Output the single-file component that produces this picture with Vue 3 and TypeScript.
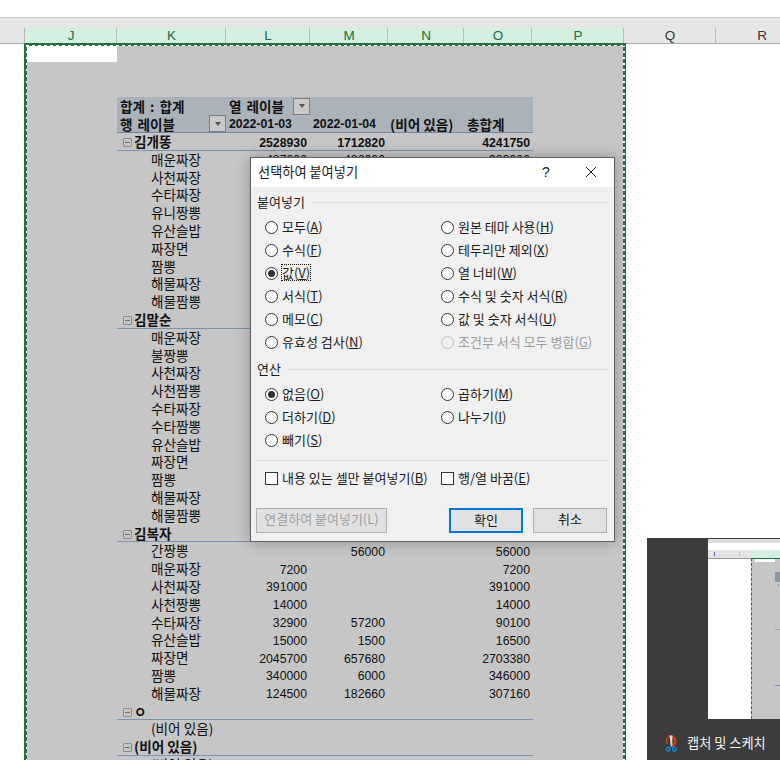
<script setup lang="ts">
interface Row { name: string; bold?: boolean; a?: string; b?: string; c?: string }
interface Opt { t: string; k: string; focus?: boolean; on?: boolean; off?: boolean }

const cols: { n: string; w: number; sel: boolean }[] = [
  { n: 'J', w: 92, sel: true }, { n: 'K', w: 109, sel: true }, { n: 'L', w: 84, sel: true },
  { n: 'M', w: 78, sel: true }, { n: 'N', w: 76, sel: true }, { n: 'O', w: 68, sel: true },
  { n: 'P', w: 92, sel: true }, { n: 'Q', w: 92, sel: false }, { n: 'R', w: 92, sel: false },
]

const sub = (name: string, a = '', b = '', c = ''): Row => ({ name, a, b, c })
const rows: Row[] = [
  { name: '김개똥', bold: true, a: '2528930', b: '1712820', c: '4241750' },
  sub('매운짜장', '487000', '486000', '923000'),
  sub('사천짜장'), sub('수타짜장'), sub('유니짱뽕'), sub('유산슬밥'), sub('짜장면'), sub('짬뽕'), sub('해물짜장'), sub('해물짬뽕'),
  { name: '김말순', bold: true },
  sub('매운짜장'), sub('불짱뽕'), sub('사천짜장'), sub('사천짬뽕'), sub('수타짜장'), sub('수타짬뽕'), sub('유산슬밥'), sub('짜장면'), sub('짬뽕'), sub('해물짜장'), sub('해물짬뽕'),
  { name: '김복자', bold: true },
  sub('간짱뽕', '', '56000', '56000'),
  sub('매운짜장', '7200', '', '7200'),
  sub('사천짜장', '391000', '', '391000'),
  sub('사천짱뽕', '14000', '', '14000'),
  sub('수타짜장', '32900', '57200', '90100'),
  sub('유산슬밥', '15000', '1500', '16500'),
  sub('짜장면', '2045700', '657680', '2703380'),
  sub('짬뽕', '340000', '6000', '346000'),
  sub('해물짜장', '124500', '182660', '307160'),
  { name: 'ㅇ', bold: true },
  sub('(비어 있음)'),
  { name: '(비어 있음)', bold: true },
  sub('(비어 있음)'),
]

const paste: Opt[] = [
  { t: '모두', k: 'A' }, { t: '원본 테마 사용', k: 'H' },
  { t: '수식', k: 'F' }, { t: '테두리만 제외', k: 'X' },
  { t: '값', k: 'V', on: true, focus: true }, { t: '열 너비', k: 'W' },
  { t: '서식', k: 'T' }, { t: '수식 및 숫자 서식', k: 'R' },
  { t: '메모', k: 'C' }, { t: '값 및 숫자 서식', k: 'U' },
  { t: '유효성 검사', k: 'N' }, { t: '조건부 서식 모두 병합', k: 'G', off: true },
]
const ops: Opt[] = [
  { t: '없음', k: 'O', on: true }, { t: '곱하기', k: 'M' },
  { t: '더하기', k: 'D' }, { t: '나누기', k: 'I' },
  { t: '빼기', k: 'S' },
]
</script>

<template>
  <div class="page">
    <div class="top"></div>
    <div class="head">
      <div class="corner"></div>
      <div
        v-for="c in cols"
        :key="c.n"
        class="col"
        :class="{ sel: c.sel }"
        :style="{ width: c.w + 'px' }"
      >{{ c.n }}</div>
    </div>

    <div class="selection">
      <div class="marching"></div>
      <div class="white-cell"></div>
      <div class="pivot">
        <div class="phead">
          <div class="pr">
            <span class="k b">합계 : 합계</span>
            <span class="lab b">열 레이블</span>
            <span class="drop"><i></i></span>
          </div>
          <div class="pr">
            <span class="k b">행 레이블<span class="drop end"><i></i></span></span>
            <span class="d1 b num">2022-01-03</span>
            <span class="d2 b num">2022-01-04</span>
            <span class="d3 b">(비어 있음)</span>
            <span class="d4 b">총합계</span>
          </div>
        </div>
        <div v-for="(r, i) in rows" :key="i" class="row" :class="{ group: r.bold }">
          <span class="k name">
            <span v-if="r.bold" class="exp"></span>{{ r.name }}
          </span>
          <span class="v l num">{{ r.a }}</span>
          <span class="v m num">{{ r.b }}</span>
          <span class="v n"></span>
          <span class="v o num">{{ r.c }}</span>
        </div>
      </div>
    </div>

    <div class="dialog">
      <div class="title">
        <span class="title-text">선택하여 붙여넣기</span>
        <span class="help">?</span>
        <svg class="close" width="12" height="12" viewBox="0 0 12 12">
          <path d="M1 1 L11 11 M11 1 L1 11" stroke="#1a1a1a" stroke-width="1" fill="none" />
        </svg>
      </div>
      <div class="body">
        <div class="legend first"><span>붙여넣기</span><i></i></div>
        <div class="opts six">
          <label v-for="o in paste" :key="o.k" class="opt" :class="{ off: o.off }">
            <span class="radio" :class="{ on: o.on }"></span>
            <span class="txt" :class="{ focus: o.focus }">{{ o.t }}(<u>{{ o.k }}</u>)</span>
          </label>
        </div>
        <div class="legend second"><span>연산</span><i></i></div>
        <div class="opts three">
          <label v-for="o in ops" :key="o.k" class="opt">
            <span class="radio" :class="{ on: o.on }"></span>
            <span class="txt">{{ o.t }}(<u>{{ o.k }}</u>)</span>
          </label>
        </div>
        <div class="rule"></div>
        <div class="opts checks">
          <label class="opt"><span class="check"></span><span class="txt">내용 있는 셀만 붙여넣기(<u>B</u>)</span></label>
          <label class="opt"><span class="check"></span><span class="txt">행/열 바꿈(<u>E</u>)</span></label>
        </div>
        <div class="buttons">
          <button class="btn link" disabled>연결하여 붙여넣기(L)</button>
          <button class="btn ok">확인</button>
          <button class="btn">취소</button>
        </div>
      </div>
    </div>

    <div class="thumb">
      <div class="shot">
        <div class="s-strip"></div>
        <div class="s-head"><b class="t1"></b><b class="t2"></b><span class="s-green"></span></div>
        <div class="s-sheet">
          <span class="s-cell"></span>
          <span class="s-pivot"></span>
          <span class="s-dot"></span>
          <span class="s-tick a"></span>
          <span class="s-tick b2"></span>
        </div>
      </div>
      <div class="caption">
        <svg class="snip" width="14" height="17" viewBox="0 0 14 17">
          <path d="M3.5 1.6 A5 5 0 1 1 7 11" fill="none" stroke="#d5400f" stroke-width="2.6" />
          <path d="M2.6 2.5 A5 5 0 0 0 2.6 8.5" fill="none" stroke="#d5400f" stroke-width="1.4" />
          <path d="M4.6 0.5 L7.4 0.5 L7.4 11.5 L5.8 11.5 Z" fill="#d8d8d8" />
          <circle cx="3" cy="14.2" r="1.8" fill="none" stroke="#1a86d0" stroke-width="1.4" />
          <circle cx="9.4" cy="14.2" r="1.8" fill="none" stroke="#1a86d0" stroke-width="1.4" />
          <path d="M4.4 12.8 L6 11 M8 12.8 L6.6 11" stroke="#1a86d0" stroke-width="1.2" />
        </svg>
        <span class="cap-text">캡처 및 스케치</span>
      </div>
    </div>
  </div>
</template>

<style scoped>
.page {
  position: relative;
  width: 780px;
  height: 760px;
  overflow: hidden;
  background: #fff;
  font-family: "Noto Sans CJK KR", "Liberation Sans", sans-serif;
  color: #1a1a1a;
}
.top { height: 17px; background: #fff; border-bottom: 1px solid #c8c8c8; }
.head {
  display: flex;
  height: 26px;
  padding-top: 10px;
  box-sizing: border-box;
  background: #e6e6e6;
  border-bottom: 1px solid #ababab;
}
.corner { width: 25px; flex: none; border-right: 1px solid #b5b5b5; box-sizing: border-box; }
.col {
  flex: none;
  box-sizing: border-box;
  padding-left: 1px;
  text-align: center;
  font: 13.5px/16px "Liberation Sans", sans-serif;
  color: #333;
  border-right: 1px solid #b9b9b9;
}
.col.sel { background: #d3f0e0; color: #1f6b45; }

.selection {
  position: relative;
  width: 602px;
  height: 718px;
  margin: -1px 0 0 24px;
  background: #c6c6c6;
  overflow: hidden;
}
.marching {
  position: absolute;
  inset: 0;
  box-sizing: border-box;
  border-style: solid;
  border-color: #217346;
  border-width: 2px 1px 0 2px;
  background:
    repeating-linear-gradient(90deg, #fff 0 3px, #217346 3px 6px) 0 0 / 100% 1px no-repeat,
    repeating-linear-gradient(180deg, #fff 0 2px, #217346 2px 6px) 0 0 / 1px 100% no-repeat,
    repeating-linear-gradient(180deg, #fff 0 2px, #217346 2px 6px) 100% 0 / 2px 100% no-repeat;
  pointer-events: none;
}
.white-cell { width: 90px; height: 16px; margin: 3px 0 0 3px; background: #fff; }

.pivot {
  width: 416px;
  margin: 35px 0 0 93px;
  font-size: 13.6px;
  color: #111;
}
.phead { background: #abb2ba; border-bottom: 1px solid #7587a0; height: 36px; box-sizing: border-box; word-spacing: 2px; }
.pr { position: relative; display: flex; height: 18px; line-height: 18px; }
.b { font-weight: 700; }
.num { font-family: "Liberation Sans", sans-serif; font-size: 12.3px; }
.k { width: 109px; flex: none; padding-left: 3px; box-sizing: border-box; position: relative; white-space: nowrap; }
.lab { margin-left: 3px; width: 64px; flex: none; white-space: nowrap; }
.drop {
  display: inline-flex;
  align-items: center;
  justify-content: center;
  width: 17px;
  height: 17px;
  box-sizing: border-box;
  border: 1px solid #7f7f7f;
  background: #c9c9c9;
  align-self: center;
}
.drop i { width: 0; height: 0; border: 3.5px solid transparent; border-top: 4px solid #555; border-bottom: 0; }
.k .drop.end { position: absolute; right: 0; top: 0; }
.d1 { width: 84px; flex: none; padding-left: 3px; box-sizing: border-box; }
.d2 { width: 78px; flex: none; padding-left: 3px; box-sizing: border-box; }
.d3 { width: 76px; flex: none; padding-left: 2px; box-sizing: border-box; white-space: nowrap; word-spacing: 0; }
.d4 { width: 69px; flex: none; padding-left: 3px; box-sizing: border-box; }
.row { display: flex; height: 17.8px; line-height: 17.8px; box-sizing: border-box; }
.row .name { padding-left: 34px; }
.row.group { font-weight: 700; border-bottom: 1px solid #7a93b4; }
.row.group .name { padding-left: 17px; }
.row.group .num { font-weight: 700; }
.exp {
  position: absolute;
  left: 6px;
  top: 5px;
  width: 9px;
  height: 9px;
  box-sizing: border-box;
  border: 1px solid #8b8b8b;
  border-radius: 1px;
  background: linear-gradient(#6f6f6f, #6f6f6f) center / 5px 1px no-repeat;
}
.v { flex: none; text-align: right; box-sizing: border-box; padding-right: 3px; padding-top: 1.5px; }
.l { width: 84px; }
.m { width: 78px; }
.n { width: 76px; }
.o { width: 69px; }

.dialog {
  position: absolute;
  left: 250px;
  top: 157px;
  width: 365px;
  height: 385px;
  box-sizing: border-box;
  border: 1px solid #5e5e5e;
  background: #f0f0f0;
  box-shadow: 0 0 14px rgba(0, 0, 0, 0.28);
  font-size: 13px;
  color: #1a1a1a;
}
.title {
  position: relative;
  display: flex;
  align-items: center;
  height: 29px;
  padding: 0 0 3px 7px;
  box-sizing: border-box;
  background: #fff;
}
.title-text { font-size: 13.2px; }
.help { position: absolute; left: 291px; top: 5px; font: 14px/18px "Liberation Sans", sans-serif; }
.close { position: absolute; left: 334px; top: 8px; }
.body { padding: 0 6px 0 5px; }
.legend { display: flex; align-items: center; gap: 6px; height: 18px; padding-left: 1px; }
.legend span { margin-top: -2px; }
.legend i { flex: 1; height: 1px; background: #dcdcdc; }
.legend.first { margin-top: 6px; }
.legend.second { margin-top: 6.5px; }
.opts {
  display: grid;
  grid-template-columns: 176px 1fr;
  grid-auto-rows: 23px;
  padding-left: 9px;
  margin-top: 4.5px;
}
.opt { display: flex; align-items: center; gap: 2px; white-space: nowrap; }
.opt.off { color: #9c9c9c; }
.txt { border: 1px dotted transparent; line-height: 15px; margin-top: -2px; }
.txt.focus { border-color: #111; }
.radio {
  flex: none;
  width: 13px;
  height: 13px;
  margin-right: 1px;
  box-sizing: border-box;
  border: 1px solid #333;
  border-radius: 50%;
  background: #fff;
  display: inline-flex;
  align-items: center;
  justify-content: center;
}
.radio.on::after { content: ""; width: 7px; height: 7px; border-radius: 50%; background: #333; }
.off .radio { border-color: #bcbcbc; background: #f0f0f0; }
.check {
  flex: none;
  width: 13px;
  height: 13px;
  margin-right: 1px;
  box-sizing: border-box;
  border: 1px solid #333;
  background: #fff;
}
.rule { height: 1px; background: #dcdcdc; margin-top: 8.5px; }
.opts.checks { margin-top: 6px; }
.buttons { display: flex; margin-top: 17.5px; }
.btn {
  width: 74px;
  height: 25px;
  box-sizing: border-box;
  border: 1px solid #adadad;
  background: #e1e1e1;
  font: inherit;
  color: #1a1a1a;
  padding: 0 0 3px;
}
.btn.link { width: 131px; color: #a0a0a0; margin-right: 62px; }
.btn.ok { border: 2px solid #0078d7; margin-right: 10px; }

.thumb {
  position: absolute;
  left: 647px;
  top: 538px;
  width: 133px;
  height: 222px;
  background: #3c3c3c;
}
.shot {
  position: absolute;
  left: 61px;
  top: 1px;
  width: 72px;
  height: 180px;
  background: #fff;
  overflow: hidden;
}
.s-strip { height: 4px; background: #dedede; }
.s-head {
  position: relative;
  height: 8px;
  margin-top: 7px;
  background: #e4e4e4;
  border-bottom: 1px solid #999;
}
.s-head b { position: absolute; top: 2px; width: 1px; height: 4px; }
.t1 { left: 6px; background: #6a5aa8; }
.t2 { left: 31px; background: #a8c8d8; }
.s-green { position: absolute; left: 43px; right: 0; top: 0; bottom: 0; background: #d3f0e0; }
.s-sheet {
  position: absolute;
  left: 43px;
  top: 19px;
  right: 0;
  bottom: 0;
  background: #c6c6c6;
  border-left: 1px dashed #217346;
  border-top: 1px solid #217346;
}
.s-cell { position: absolute; left: 3px; top: 0; width: 20px; height: 3px; background: #fff; }
.s-pivot { position: absolute; left: 23px; top: 13px; width: 5px; height: 10px; background: #8f98a2; }
.s-dot { position: absolute; left: 25px; top: 25px; width: 2px; height: 2px; background: #a8a8a8; }
.s-tick { position: absolute; left: 23px; width: 6px; height: 1px; background: #8ea3bd; }
.s-tick.a { top: 70px; }
.s-tick.b2 { top: 126px; background: #7a93c8; }
.caption {
  position: absolute;
  left: 18px;
  top: 197px;
  display: flex;
  align-items: center;
  gap: 8px;
  color: #f2f2f2;
  font-size: 13.2px;
  white-space: nowrap;
}
.cap-text { margin-top: -2px; }
.snip { flex: none; }
</style>
